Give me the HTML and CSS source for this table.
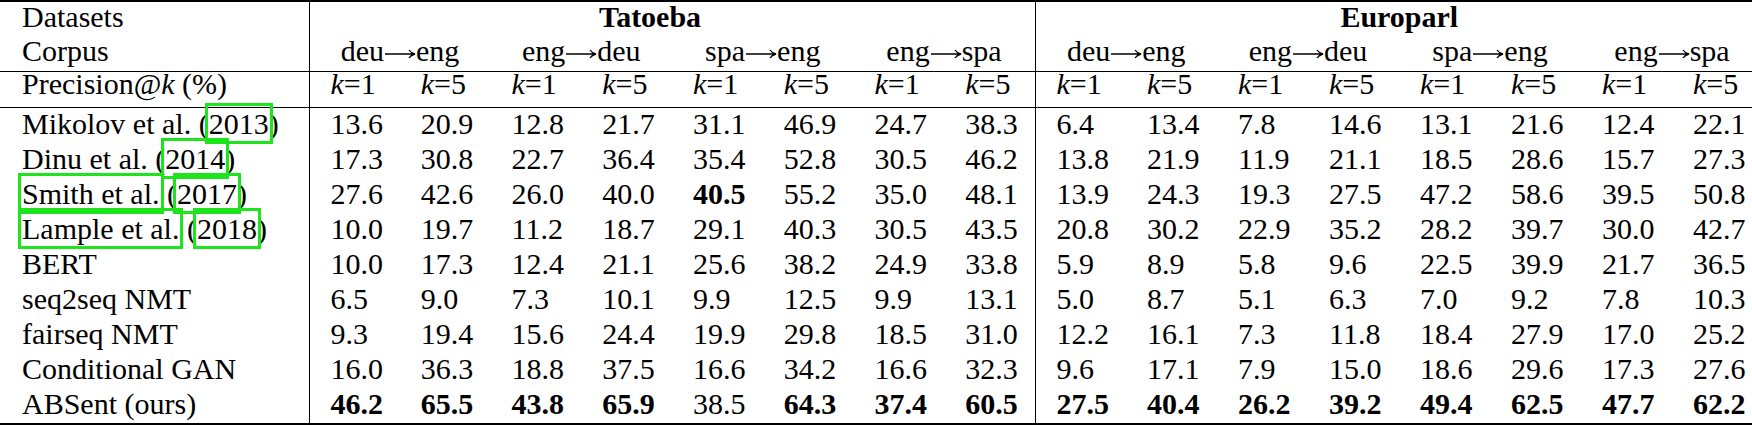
FILE: index.html
```html
<!DOCTYPE html>
<html lang="en">

<head>
    <meta charset="UTF-8">
    <title>Precision@k results</title>
    <link rel="stylesheet" href="styles.css">
</head>

<body>

    <table class="results">
        <colgroup>
            <col class="col-label">
            <col class="col-t"><col class="col-t"><col class="col-t"><col class="col-t">
            <col class="col-t"><col class="col-t"><col class="col-t"><col class="col-t">
            <col class="col-e"><col class="col-e"><col class="col-e"><col class="col-e">
            <col class="col-e"><col class="col-e"><col class="col-e"><col class="col-e">
        </colgroup>
        <thead>
            <tr class="row-head1">
                <td class="label">Datasets</td>
                <td class="group group-t sep" colspan="8">Tatoeba</td>
                <td class="group" colspan="8">Europarl</td>
            </tr>
            <tr class="row-head2 rule">
                <td class="label">Corpus</td>
                <td class="pair" colspan="2">deu<svg class="arrow" viewBox="0 0 32 12"><path d="M1 6H30M25 2Q27 5 31 6Q27 7 25 10"/></svg>eng</td>
                <td class="pair" colspan="2">eng<svg class="arrow" viewBox="0 0 32 12"><path d="M1 6H30M25 2Q27 5 31 6Q27 7 25 10"/></svg>deu</td>
                <td class="pair" colspan="2">spa<svg class="arrow" viewBox="0 0 32 12"><path d="M1 6H30M25 2Q27 5 31 6Q27 7 25 10"/></svg>eng</td>
                <td class="pair sep" colspan="2">eng<svg class="arrow" viewBox="0 0 32 12"><path d="M1 6H30M25 2Q27 5 31 6Q27 7 25 10"/></svg>spa</td>
                <td class="pair" colspan="2">deu<svg class="arrow" viewBox="0 0 32 12"><path d="M1 6H30M25 2Q27 5 31 6Q27 7 25 10"/></svg>eng</td>
                <td class="pair" colspan="2">eng<svg class="arrow" viewBox="0 0 32 12"><path d="M1 6H30M25 2Q27 5 31 6Q27 7 25 10"/></svg>deu</td>
                <td class="pair" colspan="2">spa<svg class="arrow" viewBox="0 0 32 12"><path d="M1 6H30M25 2Q27 5 31 6Q27 7 25 10"/></svg>eng</td>
                <td class="pair" colspan="2">eng<svg class="arrow" viewBox="0 0 32 12"><path d="M1 6H30M25 2Q27 5 31 6Q27 7 25 10"/></svg>spa</td>
            </tr>
            <tr class="row-head3 rule">
                <td class="label">Precision@<i>k</i> (%)</td>
                <td><i>k</i>=1</td><td><i>k</i>=5</td>
                <td><i>k</i>=1</td><td><i>k</i>=5</td>
                <td><i>k</i>=1</td><td><i>k</i>=5</td>
                <td><i>k</i>=1</td><td class="sep"><i>k</i>=5</td>
                <td><i>k</i>=1</td><td><i>k</i>=5</td>
                <td><i>k</i>=1</td><td><i>k</i>=5</td>
                <td><i>k</i>=1</td><td><i>k</i>=5</td>
                <td><i>k</i>=1</td><td><i>k</i>=5</td>
            </tr>
        </thead>
        <tbody>
            <tr>
                <td class="label">Mikolov et al. (<span class="link">2013</span>)</td>
                <td>13.6</td><td>20.9</td><td>12.8</td><td>21.7</td><td>31.1</td><td>46.9</td><td>24.7</td><td class="sep">38.3</td>
                <td>6.4</td><td>13.4</td><td>7.8</td><td>14.6</td><td>13.1</td><td>21.6</td><td>12.4</td><td>22.1</td>
            </tr>
            <tr>
                <td class="label">Dinu et al. (<span class="link">2014</span>)</td>
                <td>17.3</td><td>30.8</td><td>22.7</td><td>36.4</td><td>35.4</td><td>52.8</td><td>30.5</td><td class="sep">46.2</td>
                <td>13.8</td><td>21.9</td><td>11.9</td><td>21.1</td><td>18.5</td><td>28.6</td><td>15.7</td><td>27.3</td>
            </tr>
            <tr>
                <td class="label"><span class="link">Smith et al.</span> (<span class="link">2017</span>)</td>
                <td>27.6</td><td>42.6</td><td>26.0</td><td>40.0</td><td><b>40.5</b></td><td>55.2</td><td>35.0</td><td class="sep">48.1</td>
                <td>13.9</td><td>24.3</td><td>19.3</td><td>27.5</td><td>47.2</td><td>58.6</td><td>39.5</td><td>50.8</td>
            </tr>
            <tr>
                <td class="label"><span class="link">Lample et al.</span> (<span class="link">2018</span>)</td>
                <td>10.0</td><td>19.7</td><td>11.2</td><td>18.7</td><td>29.1</td><td>40.3</td><td>30.5</td><td class="sep">43.5</td>
                <td>20.8</td><td>30.2</td><td>22.9</td><td>35.2</td><td>28.2</td><td>39.7</td><td>30.0</td><td>42.7</td>
            </tr>
            <tr>
                <td class="label">BERT</td>
                <td>10.0</td><td>17.3</td><td>12.4</td><td>21.1</td><td>25.6</td><td>38.2</td><td>24.9</td><td class="sep">33.8</td>
                <td>5.9</td><td>8.9</td><td>5.8</td><td>9.6</td><td>22.5</td><td>39.9</td><td>21.7</td><td>36.5</td>
            </tr>
            <tr>
                <td class="label">seq2seq NMT</td>
                <td>6.5</td><td>9.0</td><td>7.3</td><td>10.1</td><td>9.9</td><td>12.5</td><td>9.9</td><td class="sep">13.1</td>
                <td>5.0</td><td>8.7</td><td>5.1</td><td>6.3</td><td>7.0</td><td>9.2</td><td>7.8</td><td>10.3</td>
            </tr>
            <tr>
                <td class="label">fairseq NMT</td>
                <td>9.3</td><td>19.4</td><td>15.6</td><td>24.4</td><td>19.9</td><td>29.8</td><td>18.5</td><td class="sep">31.0</td>
                <td>12.2</td><td>16.1</td><td>7.3</td><td>11.8</td><td>18.4</td><td>27.9</td><td>17.0</td><td>25.2</td>
            </tr>
            <tr>
                <td class="label">Conditional GAN</td>
                <td>16.0</td><td>36.3</td><td>18.8</td><td>37.5</td><td>16.6</td><td>34.2</td><td>16.6</td><td class="sep">32.3</td>
                <td>9.6</td><td>17.1</td><td>7.9</td><td>15.0</td><td>18.6</td><td>29.6</td><td>17.3</td><td>27.6</td>
            </tr>
            <tr class="ours">
                <td class="label">ABSent (ours)</td>
                <td><b>46.2</b></td><td><b>65.5</b></td><td><b>43.8</b></td><td><b>65.9</b></td><td>38.5</td><td><b>64.3</b></td><td><b>37.4</b></td><td class="sep"><b>60.5</b></td>
                <td><b>27.5</b></td><td><b>40.4</b></td><td><b>26.2</b></td><td><b>39.2</b></td><td><b>49.4</b></td><td><b>62.5</b></td><td><b>47.7</b></td><td><b>62.2</b></td>
            </tr>
        </tbody>
    </table>

</body>

</html>
```

FILE: styles.css
```css
* {
    margin: 0;
    padding: 0;
}

html,
body {
    background: #fff;
    overflow: hidden;
}

.results {
    width: 1763px;
    table-layout: fixed;
    border-collapse: collapse;
    border-top: 2px solid #000;
    border-bottom: 2px solid #000;
    font-family: "Liberation Serif", "Times New Roman", serif;
    font-size: 30px;
    line-height: 30px;
    color: #000;
}

.col-label {
    width: 309px;
}

.col-t {
    width: 90.75px;
}

.col-e {
    width: 91px;
}

.results td {
    vertical-align: top;
    text-align: left;
    white-space: nowrap;
    padding: 1px 0 0 21px;
    height: 34px;
}

.results td.label {
    padding-left: 22px;
    border-right: 1.5px solid #000;
}

.results td.sep {
    border-right: 1.5px solid #000;
}

.row-head1 td {
    height: 34px;
    padding-top: 0;
}

.row-head2 td {
    height: 35px;
    padding-top: 0;
}

.row-head3 td {
    height: 35px;
    padding-top: 0;
    line-height: 24px;
}

.rule {
    border-bottom: 1.5px solid #000;
}

.results td.group {
    text-align: center;
    padding-left: 0;
    font-weight: bold;
}

.results td.group-t {
    padding-right: 44px;
}

.results td.pair {
    text-align: center;
    padding-left: 0;
}

.arrow {
    width: 32px;
    height: 12px;
    vertical-align: 1px;
    fill: none;
    stroke: #000;
    stroke-width: 1.3;
}

b {
    font-weight: bold;
}

.link {
    outline: 3px solid #1ee41e;
    outline-offset: 1px;
}
```
